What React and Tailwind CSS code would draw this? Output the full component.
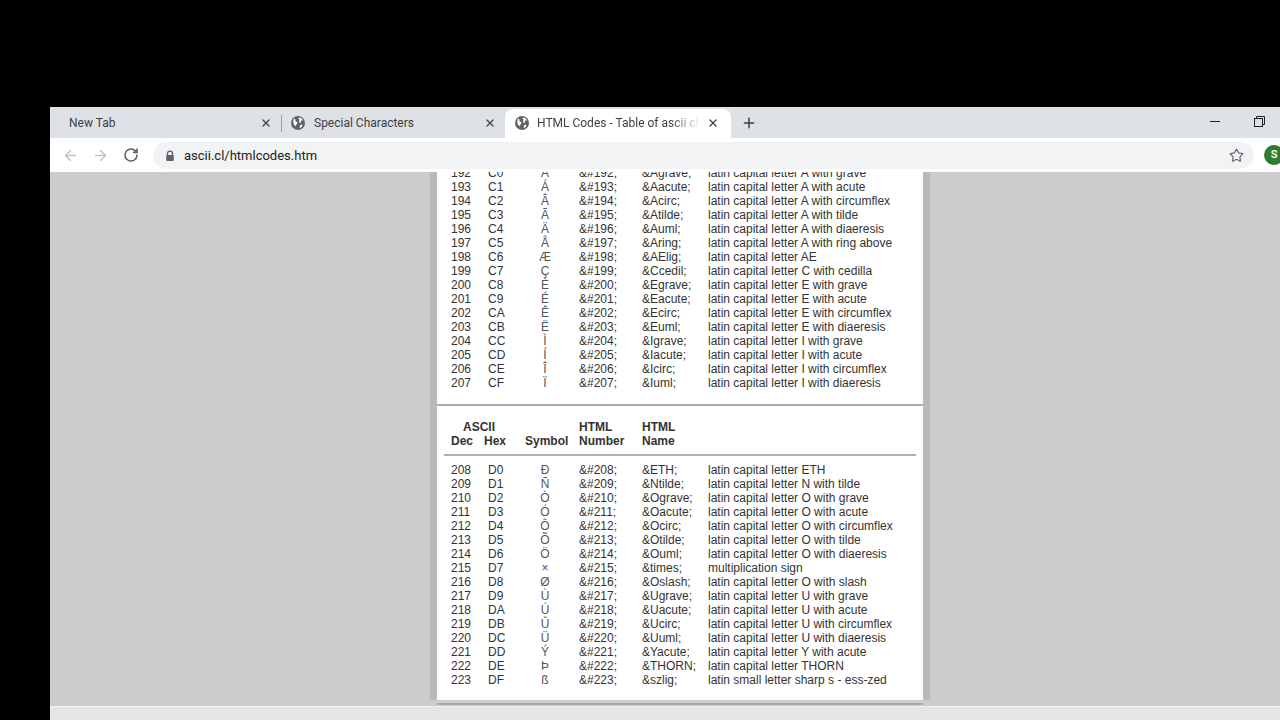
import { ArrowLeft, ArrowRight, RotateCw, Star, Plus, X } from "lucide-react";

const upper = [
  ["192", "C0", "À", "&#192;", "&Agrave;", "latin capital letter A with grave"],
  ["193", "C1", "Á", "&#193;", "&Aacute;", "latin capital letter A with acute"],
  ["194", "C2", "Â", "&#194;", "&Acirc;", "latin capital letter A with circumflex"],
  ["195", "C3", "Ã", "&#195;", "&Atilde;", "latin capital letter A with tilde"],
  ["196", "C4", "Ä", "&#196;", "&Auml;", "latin capital letter A with diaeresis"],
  ["197", "C5", "Å", "&#197;", "&Aring;", "latin capital letter A with ring above"],
  ["198", "C6", "Æ", "&#198;", "&AElig;", "latin capital letter AE"],
  ["199", "C7", "Ç", "&#199;", "&Ccedil;", "latin capital letter C with cedilla"],
  ["200", "C8", "È", "&#200;", "&Egrave;", "latin capital letter E with grave"],
  ["201", "C9", "É", "&#201;", "&Eacute;", "latin capital letter E with acute"],
  ["202", "CA", "Ê", "&#202;", "&Ecirc;", "latin capital letter E with circumflex"],
  ["203", "CB", "Ë", "&#203;", "&Euml;", "latin capital letter E with diaeresis"],
  ["204", "CC", "Ì", "&#204;", "&Igrave;", "latin capital letter I with grave"],
  ["205", "CD", "Í", "&#205;", "&Iacute;", "latin capital letter I with acute"],
  ["206", "CE", "Î", "&#206;", "&Icirc;", "latin capital letter I with circumflex"],
  ["207", "CF", "Ï", "&#207;", "&Iuml;", "latin capital letter I with diaeresis"],
];

const lower = [
  ["208", "D0", "Ð", "&#208;", "&ETH;", "latin capital letter ETH"],
  ["209", "D1", "Ñ", "&#209;", "&Ntilde;", "latin capital letter N with tilde"],
  ["210", "D2", "Ò", "&#210;", "&Ograve;", "latin capital letter O with grave"],
  ["211", "D3", "Ó", "&#211;", "&Oacute;", "latin capital letter O with acute"],
  ["212", "D4", "Ô", "&#212;", "&Ocirc;", "latin capital letter O with circumflex"],
  ["213", "D5", "Õ", "&#213;", "&Otilde;", "latin capital letter O with tilde"],
  ["214", "D6", "Ö", "&#214;", "&Ouml;", "latin capital letter O with diaeresis"],
  ["215", "D7", "×", "&#215;", "&times;", "multiplication sign"],
  ["216", "D8", "Ø", "&#216;", "&Oslash;", "latin capital letter O with slash"],
  ["217", "D9", "Ù", "&#217;", "&Ugrave;", "latin capital letter U with grave"],
  ["218", "DA", "Ú", "&#218;", "&Uacute;", "latin capital letter U with acute"],
  ["219", "DB", "Û", "&#219;", "&Ucirc;", "latin capital letter U with circumflex"],
  ["220", "DC", "Ü", "&#220;", "&Uuml;", "latin capital letter U with diaeresis"],
  ["221", "DD", "Ý", "&#221;", "&Yacute;", "latin capital letter Y with acute"],
  ["222", "DE", "Þ", "&#222;", "&THORN;", "latin capital letter THORN"],
  ["223", "DF", "ß", "&#223;", "&szlig;", "latin small letter sharp s - ess-zed"],
];

function Globe() {
  return (
    <svg width="16" height="16" viewBox="0 0 16 16" className="shrink-0">
      <circle cx="8" cy="8" r="7" fill="#5f6368" />
      <path d="M4 3.6c1 .3 1.6 1 1.4 1.9-.2.8.9 1.1 1.6 1.4.9.4.5 1.6-.3 2.1-.6.4-.4 1.5-.9 2.3C4.4 10.4 3 8.6 3.3 6.4 3.4 5.4 3.6 4.3 4 3.6zM9.6 2.6c1.6.4 2.9 1.5 3.4 3-.6.1-1.2-.2-1.8.2-.7.5-.1 1.4-.8 1.9-.6.4-1.2-.4-1.4-1-.2-.8.6-1.3.4-2-.2-.6-.9-.7-.9-1.4 0-.3.5-.6 1.1-.7zM10.7 9.6c.8-.2 1.6.2 1.8.8-.5 1.2-1.4 2.1-2.6 2.6-.3-.9 0-2.2.8-3.4z" fill="#ffffff" />
    </svg>
  );
}

function Lock() {
  return (
    <svg width="12" height="12" viewBox="0 0 12 12" className="shrink-0">
      <path d="M3.5 5V3.6a2.5 2.5 0 0 1 5 0V5" fill="none" stroke="#5f6368" strokeWidth="1.4" />
      <rect x="2.2" y="5" width="7.6" height="6" rx="1" fill="#5f6368" />
    </svg>
  );
}

function Row({ r }) {
  return (
    <div className="grid grid-cols-[37px_37px_40px_14px_63px_66px_1fr] h-[14px] leading-[14px] whitespace-nowrap">
      <span>{r[0]}</span>
      <span>{r[1]}</span>
      <span className="text-center text-[#555]">{r[2]}</span>
      <span />
      <span>{r[3]}</span>
      <span>{r[4]}</span>
      <span>{r[5]}</span>
    </div>
  );
}

export default function App() {
  const ui = { fontFamily: 'Roboto, "Noto Sans", sans-serif' };
  return (
    <div className="w-[1280px] h-[720px] bg-black flex flex-col overflow-hidden">
      <div className="h-[107px] shrink-0" />
      <div className="flex-1 ml-[50px] w-[1240px] flex flex-col min-h-0" style={ui}>
        {/* Tab strip */}
        <div className="h-[31px] shrink-0 bg-[#dee1e6] flex items-end text-[12px] text-[#3c4043]">
          <div className="w-[231px] h-[29px] flex items-center pl-[19px] pr-[9px] pb-[2px]">
            <span className="flex-1 truncate">New Tab</span>
            <X size={12} strokeWidth={2.6} className="text-[#3c4043]" />
          </div>
          <div className="w-px h-[17px] bg-[#9aa0a6] mb-[6px]" />
          <div className="w-[223px] h-[29px] flex items-center pl-[8px] pr-[9px] gap-[8px] pb-[2px]">
            <Globe />
            <span className="flex-1 truncate">Special Characters</span>
            <X size={12} strokeWidth={2.6} className="text-[#3c4043]" />
          </div>
          <div className="w-[226px] h-[29px] bg-white rounded-t-[8px] flex items-center pl-[9px] pr-[12px] gap-[7px] pb-[2px]">
            <Globe />
            <span className="flex-1 overflow-hidden whitespace-nowrap [mask-image:linear-gradient(to_right,black_82%,transparent)]">
              HTML Codes - Table of ascii characters and symbols
            </span>
            <X size={12} strokeWidth={2.6} className="text-[#3c4043]" />
          </div>
          <div className="h-[29px] flex items-center pl-[10px] pb-[2px]">
            <Plus size={16} strokeWidth={2.2} className="text-[#3c4043]" />
          </div>
          <div className="flex-1" />
          <div className="h-[29px] flex items-center gap-[34px] pr-[25px] pb-[4px]">
            <div className="w-[10px] h-px bg-[#202124]" />
            <svg width="11" height="11" viewBox="0 0 11 11">
              <rect x="0.5" y="2.5" width="8" height="8" fill="none" stroke="#202124" />
              <path d="M2.5 2.5V0.5h8v8h-2" fill="none" stroke="#202124" />
            </svg>
          </div>
        </div>

        {/* Toolbar */}
        <div className="h-[34px] shrink-0 bg-white flex items-center pl-[12px] pr-[6px]">
          <ArrowLeft size={17} strokeWidth={2} className="text-[#bdc1c6]" />
          <ArrowRight size={17} strokeWidth={2} className="text-[#bdc1c6] ml-[13px]" />
          <RotateCw size={16} strokeWidth={2.4} className="text-[#5f6368] ml-[14px]" />
          <div className="ml-[14px] flex-1 h-[27px] rounded-full bg-[#f1f3f4] flex items-center pl-[11px] pr-[10px] pt-px">
            <Lock />
            <span className="ml-[8px] text-[13px] text-[#202124]">ascii.cl/htmlcodes.htm</span>
            <div className="flex-1" />
            <Star size={15} strokeWidth={1.8} className="text-[#5f6368]" />
          </div>
          <div className="ml-[10px] w-[20px] h-[20px] rounded-full bg-[#2e7d32] text-white text-[11px] font-semibold flex items-center justify-center">
            S
          </div>
        </div>

        {/* Page */}
        <div className="flex-1 min-h-0 bg-[#cccccc] overflow-hidden pl-[380px]">
          <div
            className="w-[500px] h-full bg-white border-x-[7px] border-[#b9b9b9] text-[12px] text-[#333]"
            style={{ fontFamily: '"Liberation Sans", Arial, sans-serif' }}
          >
            <div className="-mt-[6px] pl-[14px]">
              {upper.map((r) => (
                <Row key={r[0]} r={r} />
              ))}
            </div>
            <div className="mt-[14px] h-[2px] bg-[#a9a9a9]" />
            <div className="pt-[14px] pl-[14px] font-bold leading-[14px] whitespace-nowrap">
              <div className="flex">
                <span className="w-[56px] text-center">ASCII</span>
                <span className="w-[72px]" />
                <span className="w-[63px]">HTML</span>
                <span>HTML</span>
              </div>
              <div className="flex">
                <span className="w-[33px]">Dec</span>
                <span className="w-[41px]">Hex</span>
                <span className="w-[54px]">Symbol</span>
                <span className="w-[63px]">Number</span>
                <span>Name</span>
              </div>
            </div>
            <div className="mt-[6px] mx-[7px] h-[2px] bg-[#b0b0b0]" />
            <div className="mt-[7px] pl-[14px]">
              {lower.map((r) => (
                <Row key={r[0]} r={r} />
              ))}
            </div>
            <div className="mt-[16px] h-[2px] bg-[#a9a9a9]" />
          </div>
        </div>

        {/* Bottom strip */}
        <div className="h-[14px] shrink-0 bg-[#e6e6e6] border-t border-[#f2f2f2]" />
      </div>
    </div>
  );
}
